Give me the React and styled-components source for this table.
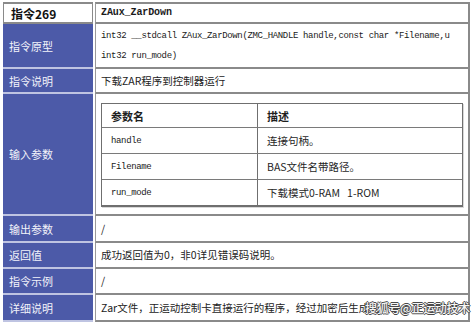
import styled, { createGlobalStyle } from "styled-components";

const GlobalStyle = createGlobalStyle`
    body {
        margin: 0;
        background: #ffffff;
        font-family: "Noto Sans CJK SC", "Noto Sans", sans-serif;
    }
`;

const PARAMS = [
    { name: 'handle', desc: '连接句柄。' },
    { name: 'Filename', desc: 'BAS文件名带路径。' },
    { name: 'run_mode', desc: '下载模式0-RAM\u00a0\u00a0\u00a01-ROM' },
];

const App = () => {
    return (
        <Page>
            <GlobalStyle />
            <Table>
                <Row $h={22} $header>
                    <Label $header>指令269</Label>
                    <Value $header><Mono $bold>ZAux_ZarDown</Mono></Value>
                </Row>
                <Row $h={45}>
                    <Label>指令原型</Label>
                    <Value $code>
                        <Mono>int32 __stdcall ZAux_ZarDown(ZMC_HANDLE handle,const char *Filename,u</Mono>
                        <Mono>int32 run_mode)</Mono>
                    </Value>
                </Row>
                <Row $h={25}>
                    <Label>指令说明</Label>
                    <Value>下载ZAR程序到控制器运行</Value>
                </Row>
                <Row $h={122}>
                    <Label>输入参数</Label>
                    <Value $inner>
                        <Inner>
                            <InnerRow $h={23}>
                                <InnerCell $bold>参数名</InnerCell>
                                <InnerCell $bold>描述</InnerCell>
                            </InnerRow>
                            {PARAMS.map(p => (
                                <InnerRow $h={26} key={p.name}>
                                    <InnerCell><Mono>{p.name}</Mono></InnerCell>
                                    <InnerCell>{p.desc}</InnerCell>
                                </InnerRow>
                            ))}
                        </Inner>
                    </Value>
                </Row>
                <Row $h={27}>
                    <Label>输出参数</Label>
                    <Value>/</Value>
                </Row>
                <Row $h={26}>
                    <Label>返回值</Label>
                    <Value>成功返回值为0，非0详见错误码说明。</Value>
                </Row>
                <Row $h={26}>
                    <Label>指令示例</Label>
                    <Value>/</Value>
                </Row>
                <Row $h={27}>
                    <Label>详细说明</Label>
                    <Value>Zar文件，正运动控制卡直接运行的程序，经过加密后生成的文件</Value>
                </Row>
            </Table>
            <Watermark>搜狐号@正运动技术</Watermark>
        </Page>
    );
};

export default App;

const Page = styled.div`
    position: relative;
    width: 474px;
    height: 326px;
    overflow: hidden;
    padding: 2px 0 0 3px;
    box-sizing: border-box;
`;

const Table = styled.div`
    width: 467px;
    display: flex;
    flex-direction: column;
`;

const Row = styled.div`
    display: grid;
    grid-template-columns: 90px 1fr;
    column-gap: 2px;
    height: ${p => p.$h}px;
    box-sizing: border-box;
`;

const Label = styled.div`
    display: flex;
    align-items: center;
    box-sizing: border-box;
    padding-left: ${p => (p.$header ? 7 : 6)}px;
    background: ${p => (p.$header ? '#ffffff' : '#4c5aa8')};
    color: ${p => (p.$header ? '#111111' : '#f2f3fa')};
    font-size: ${p => (p.$header ? 12 : 11)}px;
    font-weight: ${p => (p.$header ? 700 : 400)};
    border-bottom: 2px solid ${p => (p.$header ? '#8a8a8a' : '#bfc4e2')};
    border-top: ${p => (p.$header ? '2px solid #8a8a8a' : 'none')};
    border-left: ${p => (p.$header ? '1px solid #8a8a8a' : 'none')};
    border-right: ${p => (p.$header ? '1px solid #8a8a8a' : 'none')};
`;

const Value = styled.div`
    display: flex;
    flex-direction: ${p => (p.$code ? 'column' : 'row')};
    justify-content: ${p => (p.$code ? 'center' : 'flex-start')};
    align-items: ${p => (p.$code ? 'flex-start' : p.$inner ? 'flex-start' : 'center')};
    box-sizing: border-box;
    padding: ${p => (p.$inner ? '9px 5px 0 5px' : '0 0 0 5px')};
    background: #ffffff;
    color: #222222;
    font-size: 10.5px;
    line-height: 20px;
    white-space: nowrap;
    overflow: hidden;
    border-left: 1px solid #9a9a9a;
    border-right: 2px solid #8a8a8a;
    border-bottom: 2px solid #8a8a8a;
    border-top: ${p => (p.$header ? '2px solid #8a8a8a' : 'none')};
`;

const Mono = styled.span`
    font-family: "Liberation Mono", "DejaVu Sans Mono", monospace;
    font-size: ${p => (p.$bold ? 10 : 9)}px;
    font-weight: ${p => (p.$bold ? 700 : 400)};
    letter-spacing: ${p => (p.$bold ? '-0.1px' : '-0.35px')};
    color: #1a1a1a;
`;

const Inner = styled.div`
    width: 362px;
    display: flex;
    flex-direction: column;
    border: 1px solid #6f6f6f;
    border-bottom-width: 2px;
    box-shadow: 1px 1px 0 #d8d8d8;
`;

const InnerRow = styled.div`
    display: grid;
    grid-template-columns: 155px 1fr;
    height: ${p => p.$h}px;
    box-sizing: border-box;
    & + & {
        border-top: 1px solid #7a7a7a;
    }
`;

const InnerCell = styled.div`
    display: flex;
    align-items: center;
    padding-left: 9px;
    font-size: ${p => (p.$bold ? 11 : 10.5)}px;
    font-weight: ${p => (p.$bold ? 700 : 400)};
    color: #1f1f1f;
    & + & {
        border-left: 1px solid #6f6f6f;
    }
`;

const Watermark = styled.div`
    position: absolute;
    left: 365px;
    top: 299px;
    font-size: 12px;
    font-weight: 500;
    color: #f6f6f6;
    letter-spacing: -0.3px;
    text-shadow:
        1px 0 0 #4a4a4a,
        -1px 0 0 #4a4a4a,
        0 1px 0 #4a4a4a,
        0 -1px 0 #4a4a4a;
`;
